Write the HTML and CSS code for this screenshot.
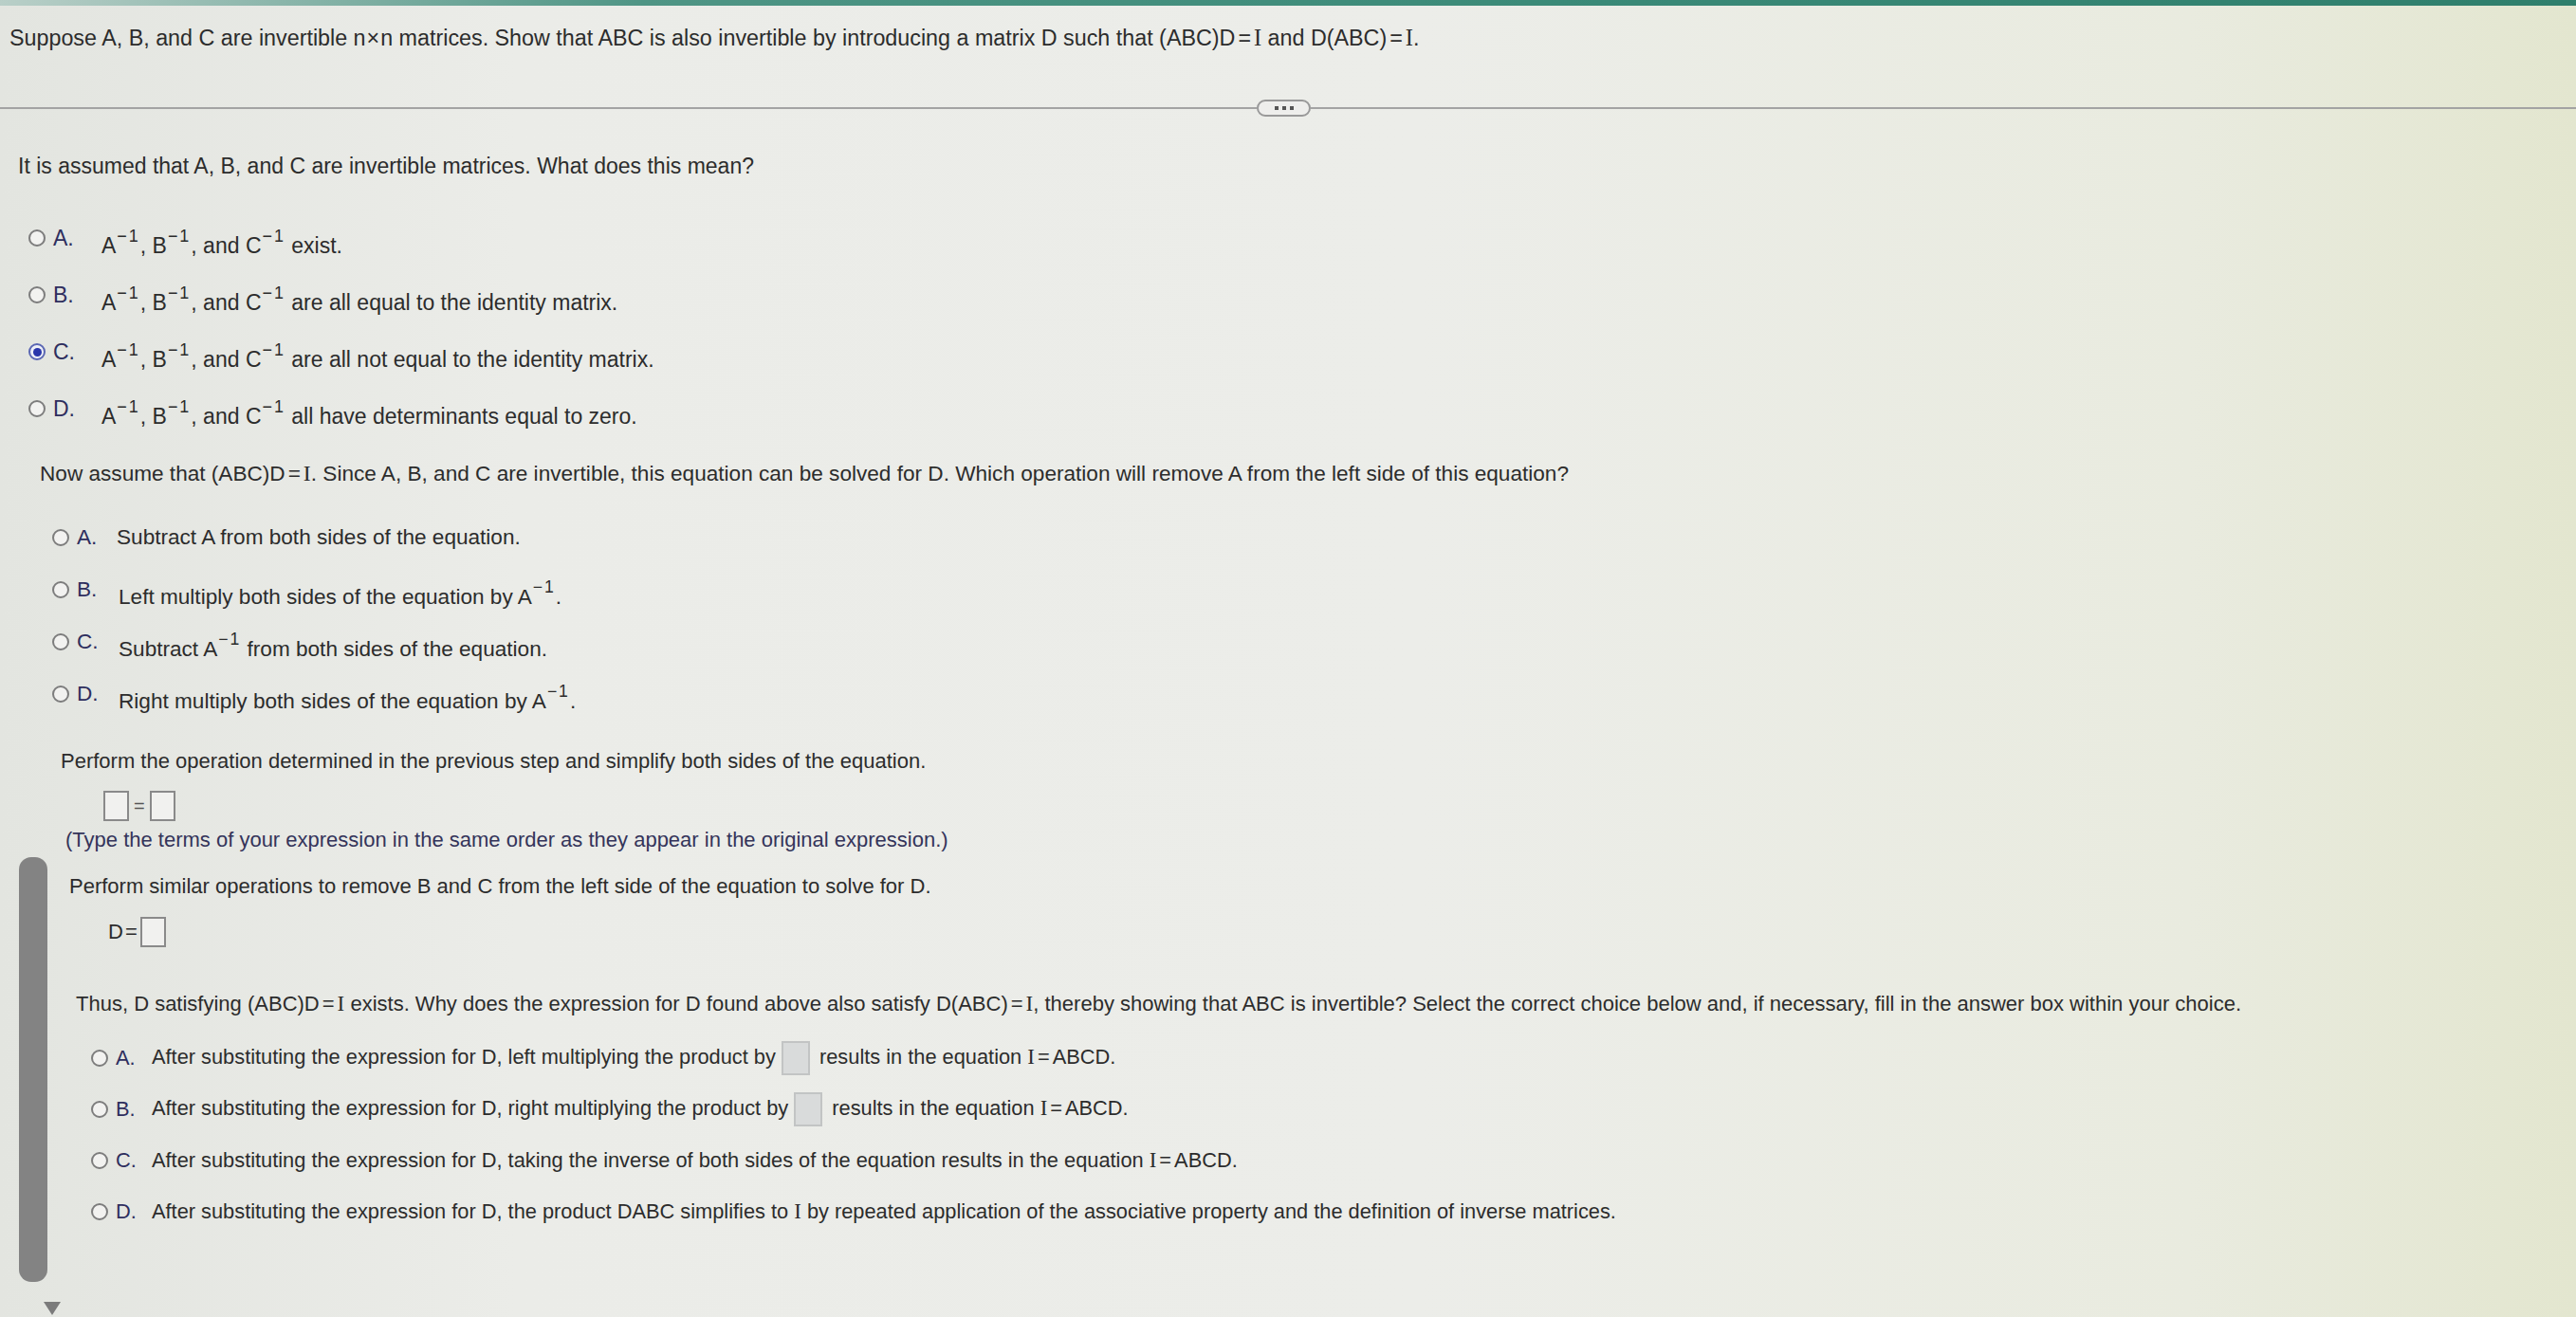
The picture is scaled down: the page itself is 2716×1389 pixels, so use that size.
FILE: index.html
```html
<!DOCTYPE html>
<html>
<head>
<meta charset="utf-8">
<link rel="stylesheet" href="styles.css">
</head>
<body>
<div class="topbar"></div>
<div class="page">
  <div class="title">Suppose A, B, and C are invertible n<span class="x">×</span>n matrices. Show that ABC is also invertible by introducing a matrix D such that (ABC)D<span class="eq">=</span><span class="serif">I</span> and D(ABC)<span class="eq">=</span><span class="serif">I</span>.</div>

  <div class="divider">
    <div class="rule"></div>
    <div class="more"><span class="dot"></span><span class="dot"></span><span class="dot"></span></div>
    <div class="rule"></div>
  </div>

  <div class="q q1">It is assumed that A, B, and C are invertible matrices. What does this mean?</div>
  <div class="opts g1">
    <div class="opt"><span class="radio"></span><span class="lbl">A.</span><span class="math">A<sup>− 1</sup>, B<sup>− 1</sup>, and C<sup>− 1</sup> exist.</span></div>
    <div class="opt"><span class="radio"></span><span class="lbl">B.</span><span class="math">A<sup>− 1</sup>, B<sup>− 1</sup>, and C<sup>− 1</sup> are all equal to the identity matrix.</span></div>
    <div class="opt"><span class="radio on"></span><span class="lbl">C.</span><span class="math">A<sup>− 1</sup>, B<sup>− 1</sup>, and C<sup>− 1</sup> are all not equal to the identity matrix.</span></div>
    <div class="opt"><span class="radio"></span><span class="lbl">D.</span><span class="math">A<sup>− 1</sup>, B<sup>− 1</sup>, and C<sup>− 1</sup> all have determinants equal to zero.</span></div>
  </div>

  <div class="q q2">Now assume that (ABC)D<span class="eq">=</span><span class="serif">I</span>. Since A, B, and C are invertible, this equation can be solved for D. Which operation will remove A from the left side of this equation?</div>
  <div class="opts g2">
    <div class="opt"><span class="radio"></span><span class="lbl">A.</span><span class="txt">Subtract A from both sides of the equation.</span></div>
    <div class="opt"><span class="radio"></span><span class="lbl">B.</span><span class="math">Left multiply both sides of the equation by A<sup>− 1</sup>.</span></div>
    <div class="opt"><span class="radio"></span><span class="lbl">C.</span><span class="math">Subtract A<sup>− 1</sup> from both sides of the equation.</span></div>
    <div class="opt"><span class="radio"></span><span class="lbl">D.</span><span class="math">Right multiply both sides of the equation by A<sup>− 1</sup>.</span></div>
  </div>

  <div class="q q3">Perform the operation determined in the previous step and simplify both sides of the equation.</div>
  <div class="boxrow b1"><span class="box"></span><span class="beq">=</span><span class="box"></span></div>
  <div class="q hint">(Type the terms of your expression in the same order as they appear in the original expression.)</div>
  <div class="q q4">Perform similar operations to remove B and C from the left side of the equation to solve for D.</div>
  <div class="boxrow b2"><span class="beq d">D<span class="eq2">=</span></span><span class="box"></span></div>

  <div class="q q5">Thus, D satisfying (ABC)D<span class="eq">=</span><span class="serif">I</span> exists. Why does the expression for D found above also satisfy D(ABC)<span class="eq">=</span><span class="serif">I</span>, thereby showing that ABC is invertible? Select the correct choice below and, if necessary, fill in the answer box within your choice.</div>
  <div class="opts g3">
    <div class="opt"><span class="radio"></span><span class="lbl">A.</span><span class="txt">After substituting the expression for D, left multiplying the product by <span class="gbox"></span> results in the equation <span class="serif">I</span><span class="eq">=</span>ABCD.</span></div>
    <div class="opt"><span class="radio"></span><span class="lbl">B.</span><span class="txt">After substituting the expression for D, right multiplying the product by <span class="gbox"></span> results in the equation <span class="serif">I</span><span class="eq">=</span>ABCD.</span></div>
    <div class="opt"><span class="radio"></span><span class="lbl">C.</span><span class="txt">After substituting the expression for D, taking the inverse of both sides of the equation results in the equation <span class="serif">I</span><span class="eq">=</span>ABCD.</span></div>
    <div class="opt"><span class="radio"></span><span class="lbl">D.</span><span class="txt">After substituting the expression for D, the product DABC simplifies to <span class="serif">I</span> by repeated application of the associative property and the definition of inverse matrices.</span></div>
  </div>
</div>
<div class="scrollbar"></div>
<div class="scrollarrow"></div>
</body>
</html>
```

FILE: styles.css
```css
html, body {
  margin: 0;
  padding: 0;
}
body {
  width: 2716px;
  height: 1389px;
  overflow: hidden;
  position: relative;
  background: linear-gradient(to right, #e3e5e0 0%, #ebece8 20%, #ecede9 55%, #e9ebdf 85%, #e3e6cf 100%);
  font-family: "Liberation Sans", Arial, sans-serif;
  font-size: 22px;
  color: #2c2c2c;
}
.topbar {
  height: 6px;
  background: linear-gradient(to right, #b9cfc8 0%, #4f9585 25%, #3b8a78 60%, #2f7f6c 100%);
}
.page {
  display: flex;
  flex-direction: column;
}
.title {
  margin-top: 19px;
  padding-left: 10px;
  line-height: 30px;
  white-space: nowrap;
  font-size: 23.3px;
}
.serif {
  font-family: "Liberation Serif", "Times New Roman", serif;
  font-size: 1.05em;
}
.eq {
  padding: 0 3px;
}
.x {
  padding: 0 1px;
}
.divider {
  margin-top: 50px;
  display: grid;
  grid-template-columns: 1325px 57px 1fr;
  align-items: center;
  height: 18px;
}
.rule {
  height: 2px;
  background: #a3a3a3;
}
.more {
  height: 18px;
  box-sizing: border-box;
  border: 2px solid #999;
  border-radius: 9px;
  background: #eeeeec;
  display: flex;
  justify-content: center;
  align-items: center;
  gap: 4px;
}
.dot {
  width: 4px;
  height: 4px;
  background: #555;
}
.q {
  line-height: 30px;
  white-space: nowrap;
}
.q1 { margin-top: 37px; padding-left: 19px; font-size: 23px; }
.q2 { margin-top: 38px; padding-left: 42px; font-size: 22.6px; }
.q3 { margin-top: 41px; padding-left: 64px; }
.hint { margin-top: 5px; padding-left: 69px; color: #34345a; }
.q4 { margin-top: 19px; padding-left: 73px; }
.q5 { margin-top: 44px; padding-left: 80px; }

.opts {
  display: flex;
  flex-direction: column;
}
.g1 { margin-top: 46px; gap: 30px; padding-left: 30px; font-size: 23px; }
.g2 { margin-top: 37px; gap: 25px; padding-left: 55px; font-size: 22.6px; }
.g3 { margin-top: 27px; gap: 24px; padding-left: 96px; font-size: 21.8px; }

.opt {
  height: 30px;
  display: flex;
  align-items: center;
  white-space: nowrap;
}
.radio {
  width: 18px;
  height: 18px;
  box-sizing: border-box;
  border: 2px solid #7d7d7d;
  border-radius: 50%;
  background: #f2f2f0;
  flex: none;
  display: flex;
  align-items: center;
  justify-content: center;
}
.radio.on {
  border-color: #5b67b3;
  background: #eef0f8;
}
.radio.on::after {
  content: "";
  width: 9px;
  height: 9px;
  border-radius: 50%;
  background: #2a36ab;
}
.lbl {
  margin-left: 8px;
  color: #2e2e5e;
  flex: none;
}
.g1 .lbl { width: 49px; }
.g2 .lbl { width: 40px; }
.g3 .lbl { width: 36px; }
.math {
  position: relative;
  top: 8px;
  margin-left: 2px;
}
.txt {
  margin-left: 2px;
}
.g2 .math { margin-left: 4px; }
sup {
  font-size: 0.78em;
  vertical-align: 0;
  position: relative;
  top: -12px;
  margin-left: 1px;
  margin-right: 2px;
  word-spacing: -3px;
}
.boxrow {
  height: 32px;
  display: flex;
  align-items: center;
}
.b1 { margin-top: 16px; padding-left: 109px; }
.b2 { margin-top: 17px; padding-left: 114px; }
.box {
  width: 27px;
  height: 32px;
  box-sizing: border-box;
  border: 2px solid #8a8a8a;
  background: #f1f1ef;
}
.beq {
  padding: 0 5px;
  font-size: 20px;
  color: #555;
}
.beq.d {
  padding: 0 3px 0 0;
  font-size: 22px;
  color: #2c2c2c;
}
.eq2 { padding-left: 2px; }
.gbox {
  display: inline-block;
  vertical-align: middle;
  width: 30px;
  height: 36px;
  box-sizing: border-box;
  border: 2px solid #c2c4c4;
  background: #d9dbdb;
  margin: 0 4px 0 0;
}
.scrollbar {
  position: absolute;
  left: 20px;
  top: 904px;
  width: 30px;
  height: 448px;
  border-radius: 13px;
  background: #838383;
}
.scrollarrow {
  position: absolute;
  left: 46px;
  top: 1373px;
  width: 0;
  height: 0;
  border-left: 9px solid transparent;
  border-right: 9px solid transparent;
  border-top: 14px solid #7b7b7b;
}
```
